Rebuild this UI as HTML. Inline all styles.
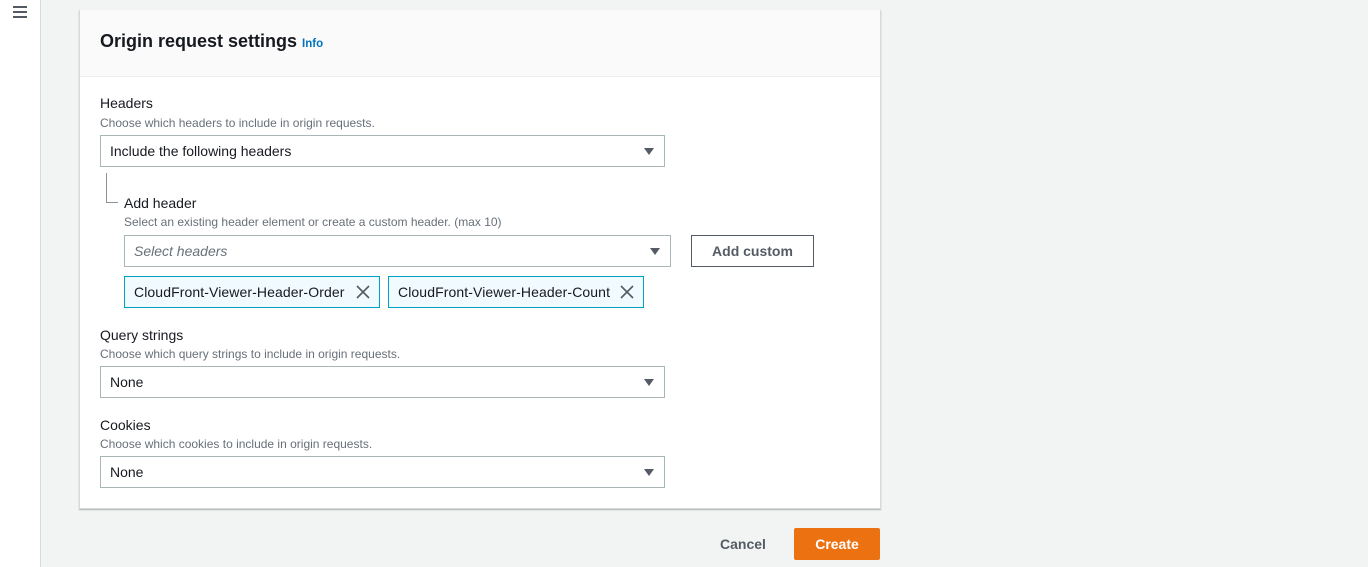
<!DOCTYPE html>
<html><head><style>
*{box-sizing:border-box;margin:0;padding:0}
body{width:1368px;height:567px;overflow:hidden;background:#f2f3f3;font-family:"Liberation Sans",Arial,sans-serif;color:#16191f;position:relative}
.side{position:absolute;left:0;top:0;width:41px;height:567px;background:#fff;border-right:1px solid #d5dbdb}
.hb{position:absolute;left:13px;width:14px;height:2px;background:#545b64}
.panel{position:absolute;left:79px;top:10px;width:802px;height:499px;background:#fff;border:1px solid #d5dbdb;border-top:none;box-shadow:0 1px 1px rgba(0,28,36,.3)}
.ph{position:absolute;left:0;top:0;width:800px;height:67px;background:#fafafa;border-bottom:1px solid #eaeded}
.abs{position:absolute;white-space:nowrap}
.lbl{font-size:14px;color:#16191f}
.desc{font-size:12px;color:#687078}
.sel{position:absolute;height:32px;border:1px solid #aab7b8;background:#fff;font-size:14px;padding-left:9px;line-height:30px}
.sel .ar{position:absolute;right:10px;top:12px;width:0;height:0;border-left:5px solid transparent;border-right:5px solid transparent;border-top:7px solid #545b64}
.tok{position:absolute;top:276px;height:32px;background:#f1faff;border:1px solid #00a1c9;font-size:14px;line-height:30px;padding-left:9px;letter-spacing:0.1px}
</style></head><body>
<div class="side"><div class="hb" style="top:6px"></div><div class="hb" style="top:11px"></div><div class="hb" style="top:16px"></div></div>
<div class="panel"><div class="ph"></div></div>
<div class="abs" style="left:100px;top:31px;font-size:18px;font-weight:bold">Origin request settings <span style="font-size:11.5px;color:#0073bb;font-weight:bold">Info</span></div>

<div class="abs lbl" style="left:100px;top:95px">Headers</div>
<div class="abs desc" style="left:100px;top:116px">Choose which headers to include in origin requests.</div>
<div class="sel" style="left:100px;top:135px;width:565px">Include the following headers<div class="ar"></div></div>

<div class="abs" style="left:106px;top:173px;width:12px;height:30px;border-left:1px solid #879596;border-bottom:1px solid #879596"></div>
<div class="abs lbl" style="left:124px;top:195px">Add header</div>
<div class="abs desc" style="left:124px;top:215px">Select an existing header element or create a custom header. (max 10)</div>
<div class="sel" style="left:124px;top:235px;width:547px;font-style:italic;color:#687078">Select headers<div class="ar"></div></div>
<div class="abs" style="left:691px;top:235px;width:123px;height:32px;border:1px solid #545b64;background:#fff;font-size:14px;font-weight:bold;color:#545b64;text-align:center;line-height:30px">Add custom</div>

<div class="tok" style="left:124px;width:256px">CloudFront-Viewer-Header-Order<svg style="position:absolute;right:9px;top:8px" width="14" height="14"><path d="M1 1L13 13M13 1L1 13" stroke="#545b64" stroke-width="1.6"/></svg></div>
<div class="tok" style="left:388px;width:256px">CloudFront-Viewer-Header-Count<svg style="position:absolute;right:9px;top:8px" width="14" height="14"><path d="M1 1L13 13M13 1L1 13" stroke="#545b64" stroke-width="1.6"/></svg></div>

<div class="abs lbl" style="left:100px;top:327px">Query strings</div>
<div class="abs desc" style="left:100px;top:347px">Choose which query strings to include in origin requests.</div>
<div class="sel" style="left:100px;top:366px;width:565px">None<div class="ar"></div></div>

<div class="abs lbl" style="left:100px;top:417px">Cookies</div>
<div class="abs desc" style="left:100px;top:437px">Choose which cookies to include in origin requests.</div>
<div class="sel" style="left:100px;top:456px;width:565px">None<div class="ar"></div></div>

<div class="abs" style="left:720px;top:536px;font-size:14px;font-weight:bold;color:#545b64">Cancel</div>
<div class="abs" style="left:794px;top:528px;width:86px;height:32px;background:#ec7211;border-radius:2px;color:#fff;font-size:14px;font-weight:bold;text-align:center;line-height:32px">Create</div>
</body></html>
